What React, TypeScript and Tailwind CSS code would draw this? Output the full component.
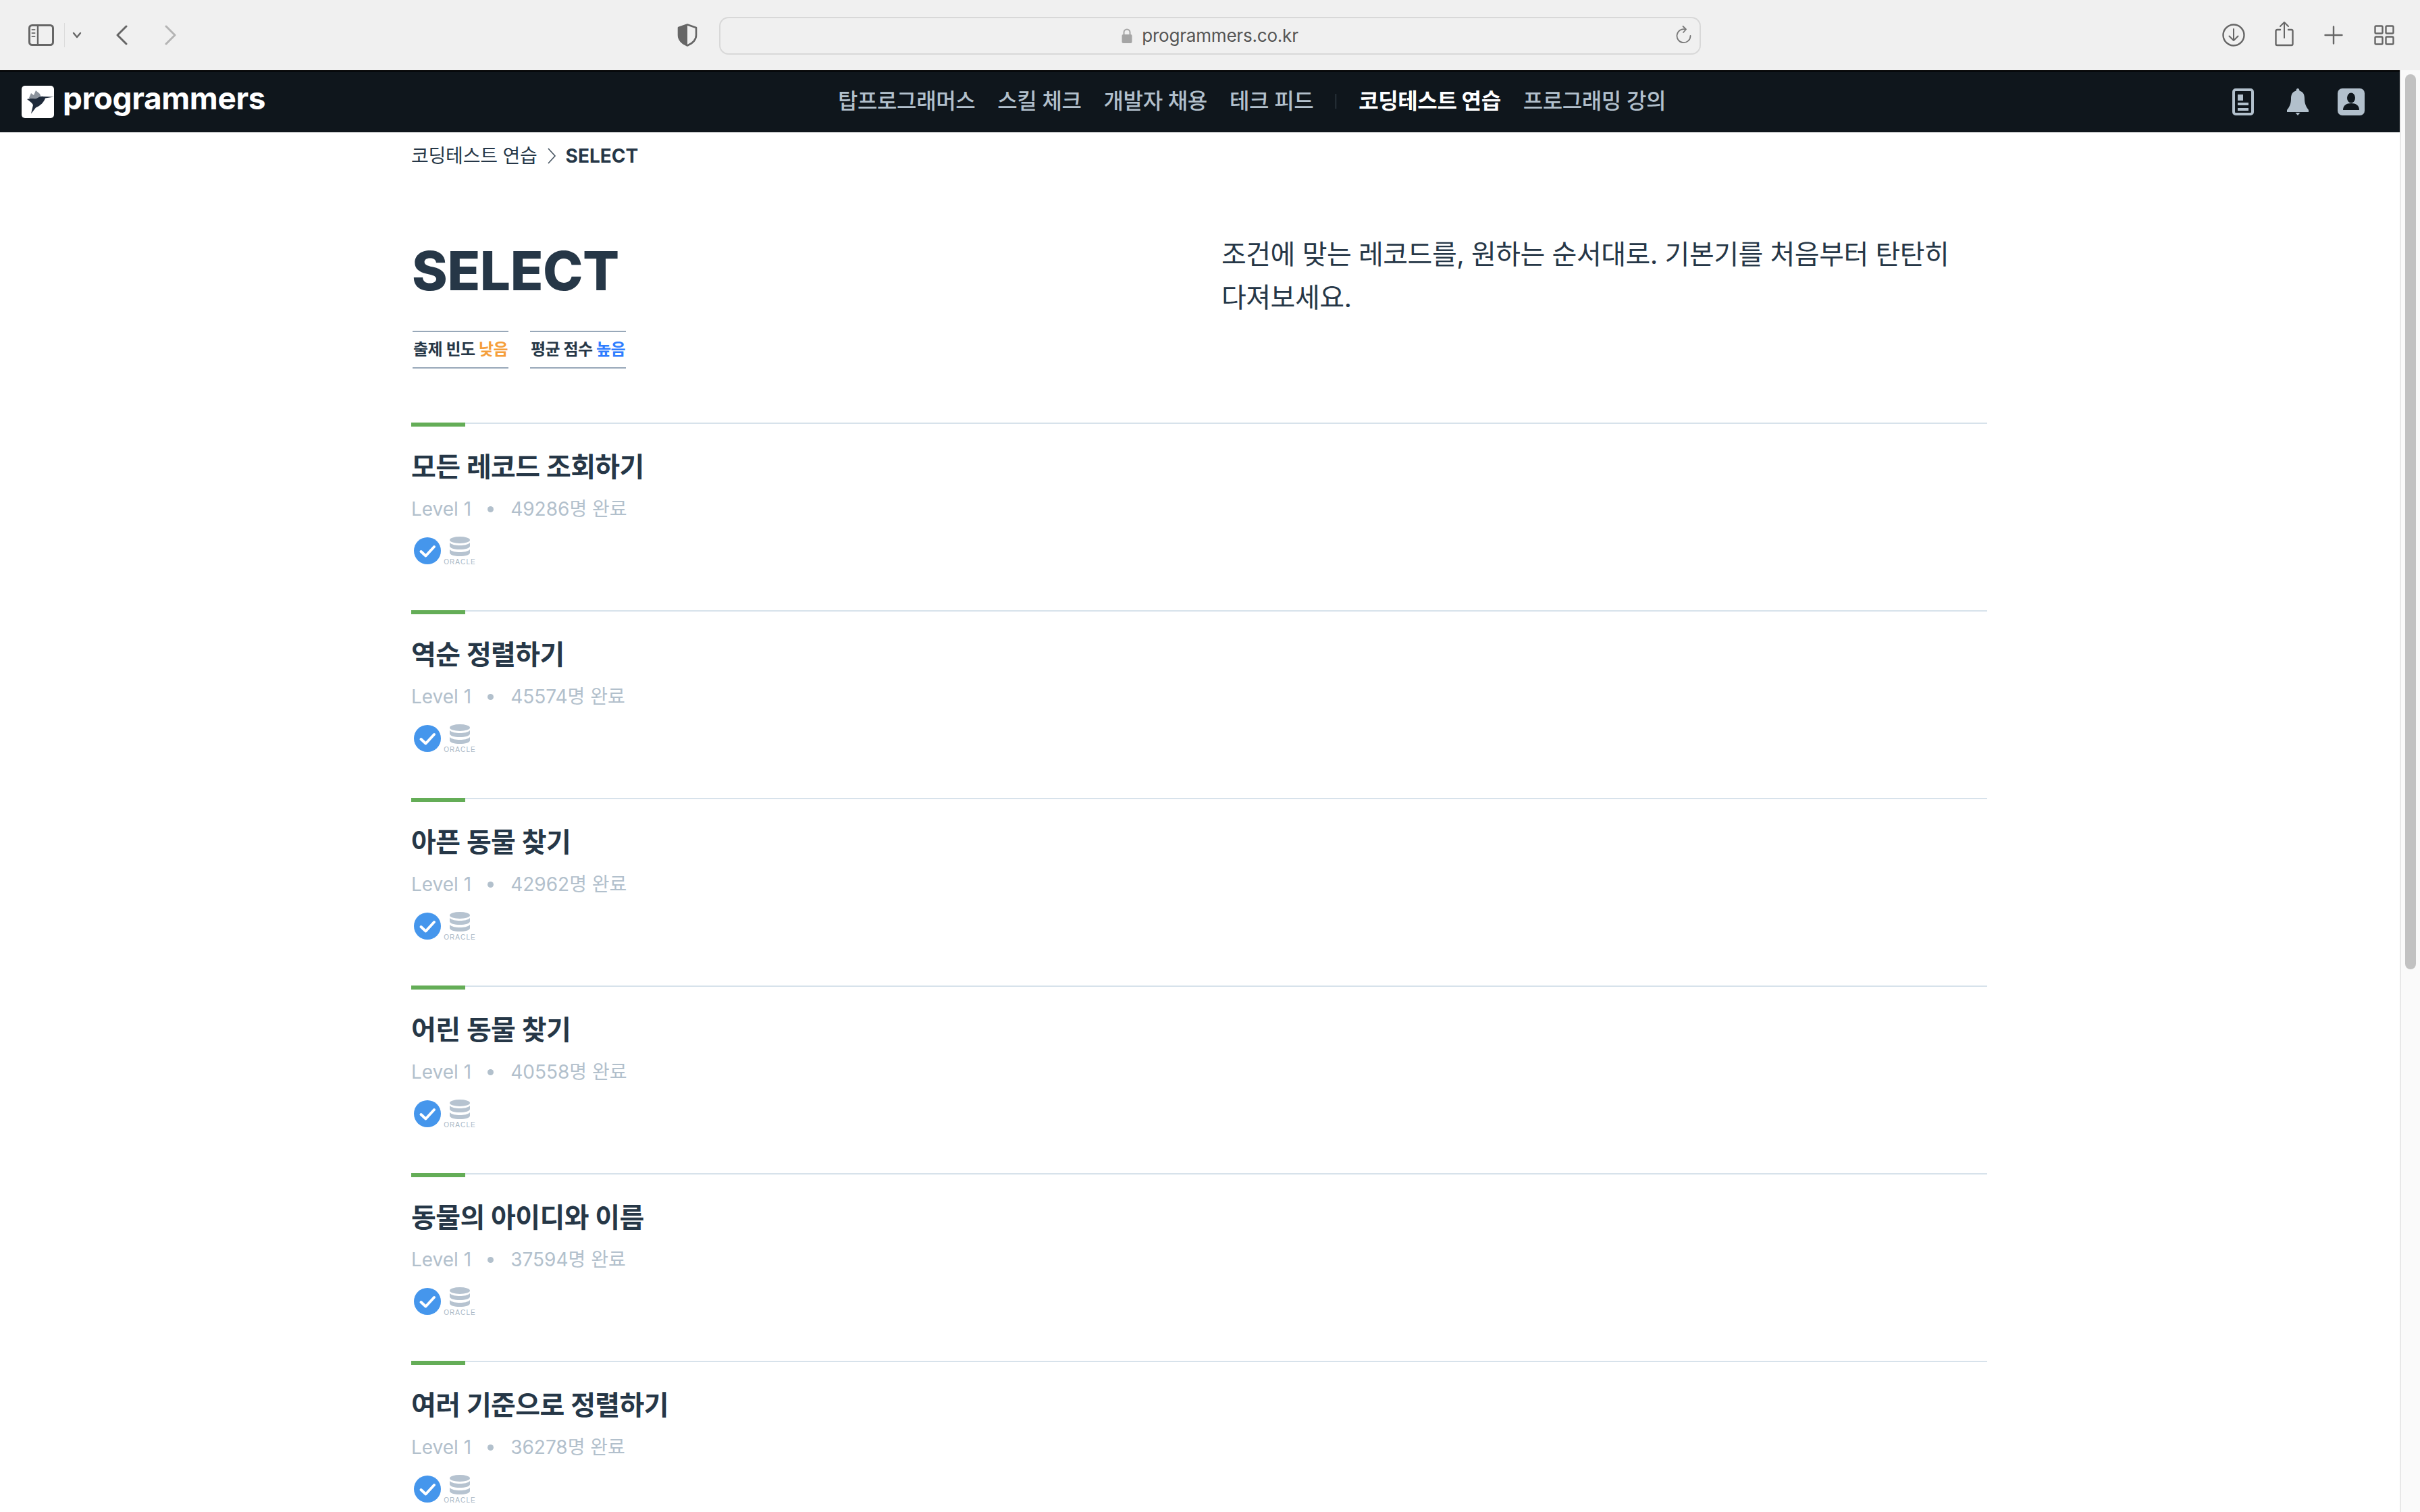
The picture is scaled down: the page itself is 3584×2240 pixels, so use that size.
import React from "react";

const font = "font-['Inter','Noto_Sans_CJK_KR',sans-serif]";
const items = [
  ["모든 레코드 조회하기", "49286"],
  ["역순 정렬하기", "45574"],
  ["아픈 동물 찾기", "42962"],
  ["어린 동물 찾기", "40558"],
  ["동물의 아이디와 이름", "37594"],
  ["여러 기준으로 정렬하기", "36278"],
];

function Stroke({ w, h, children, className = "" }: { w: number; h: number; children: React.ReactNode; className?: string }) {
  return (
    <svg width={w} height={h} viewBox={`0 0 ${w} ${h}`} fill="none" stroke="#666" strokeWidth="2.4" strokeLinecap="round" strokeLinejoin="round" className={`block shrink-0 ${className}`}>
      {children}
    </svg>
  );
}

function Toolbar() {
  return (
    <div className="flex h-[104px] shrink-0 items-center bg-[#f0f0f0]">
      <Stroke w={38} h={32} className="ml-[42px]">
        <rect x="1.5" y="1.5" width="35" height="29" rx="4" strokeWidth="3" />
        <path d="M14 2v28" />
        <path d="M5.5 8h4M5.5 13h4M5.5 18h4" strokeWidth="2" stroke="#777" />
      </Stroke>
      <div className="ml-[15px] h-[36px] w-[1px] bg-[#dcdcdc]" />
      <Stroke w={14} h={10} className="ml-[11px]">
        <path d="M2 2l5 6 5-6" strokeWidth="2.4" />
      </Stroke>
      <Stroke w={18} h={30} className="ml-[50px]">
        <path d="M16 2L3 15l13 13" strokeWidth="3" />
      </Stroke>
      <Stroke w={18} h={30} className="ml-[55px]">
        <path d="M2 2l13 13L2 28" stroke="#b4b4b4" strokeWidth="3" />
      </Stroke>
      <svg width="30" height="34" viewBox="0 0 30 34" className="ml-[741px] block shrink-0">
        <path d="M15 1.5l13 4.5v11c0 7-5 12-13 15.5C7 29 2 24 2 17V6z" fill="none" stroke="#666" strokeWidth="2.6" strokeLinejoin="round" />
        <path d="M15 1.5L2 6v11c0 7 5 12 13 15.5z" fill="#666" />
      </svg>
      <div className="relative ml-[32px] flex h-[56px] w-[1454px] translate-y-[1px] items-center justify-center rounded-[14px] border-2 border-[#d8d8d8] bg-[#f0f0f0]">
        <svg width="16" height="24" viewBox="0 0 16 24" className="mr-[14px] block">
          <path d="M3.5 12V7a4.5 4.5 0 019 0v5" fill="none" stroke="#a5a5a5" strokeWidth="2" />
          <rect x="0.5" y="10" width="15" height="13" rx="2" fill="#a5a5a5" />
        </svg>
        <span className={`${font} text-[26px] leading-none tracking-[-0.2px] text-[#555]`}>programmers.co.kr</span>
        <svg width="24" height="28" viewBox="0 0 24 28" fill="none" stroke="#777" strokeWidth="1.8" strokeLinecap="round" strokeLinejoin="round" className="absolute right-[11px] top-[11px] block">
          <path d="M14 5.5A10 10 0 1021.5 15" />
          <path d="M10.5 1l4.5 4.5L11 10" />
        </svg>
      </div>
      <Stroke w={34} h={34} className="ml-[772px]">
        <circle cx="17" cy="17" r="15.5" />
        <path d="M17 8v17M10.5 18.5L17 25l6.5-6.5" strokeWidth="2" />
      </Stroke>
      <Stroke w={28} h={38} className="ml-[44px] -translate-y-[2px]">
        <path d="M8 13H3.5A2 2 0 001.5 15v19a2 2 0 002 2h21a2 2 0 002-2V15a2 2 0 00-2-2H20" />
        <path d="M14 25V2M8 8l6-6 6 6" strokeWidth="2" />
      </Stroke>
      <Stroke w={28} h={28} className="ml-[45px]">
        <path d="M14 1.5v25M1.5 14h25" />
      </Stroke>
      <Stroke w={30} h={30} className="ml-[46px]">
        <rect x="1.5" y="1.5" width="11" height="11" rx="1.5" />
        <rect x="17.5" y="1.5" width="11" height="11" rx="1.5" />
        <rect x="1.5" y="17.5" width="11" height="11" rx="1.5" />
        <rect x="17.5" y="17.5" width="11" height="11" rx="1.5" />
      </Stroke>
    </div>
  );
}

function Logo() {
  return (
    <div className="flex items-center">
      <svg width="48" height="48" viewBox="0 0 48 48" className="ml-[32px] block shrink-0">
        <rect width="48" height="48" rx="5" fill="#fff" />
        <path d="M11 18l3-7 4 3 3-7 6 5 3 8-10 6z" fill="#8c939c" />
        <path d="M8 20c6-2 10 0 14-1 3-1 5-4 10-3l16 .5-13 2c-2 6-7 11-14 14l-7 9 3-13c-2-4-6-6-9-8.500z" fill="#1e2a3a" />
      </svg>
      <span className="ml-[13px] w-[300px] -translate-y-[6px] whitespace-nowrap text-[46px] font-bold leading-none tracking-[-0.4px] text-white">programmers</span>
    </div>
  );
}

function Nav() {
  const grey = "text-[#b2c0cc]";
  return (
    <div className={`${font} flex h-[92px] shrink-0 items-center border-t-2 border-black bg-[#0f161c]`}>
      <Logo />
      <nav className="ml-[848px] flex -translate-y-[1px] items-center gap-[33px] text-[32px] font-medium leading-none tracking-[-0.4px]">
        <span className={grey}>탑프로그래머스</span>
        <span className={grey}>스킬 체크</span>
        <span className={grey}>개발자 채용</span>
        <span className={grey}>테크 피드</span>
        <span className="h-[22px] w-[1px] bg-[#46525c]" />
        <span className="font-bold text-white">코딩테스트 연습</span>
        <span className={grey}>프로그래밍 강의</span>
      </nav>
      <svg width="32" height="40" viewBox="0 0 32 40" className="ml-[839px] block shrink-0">
        <rect x="2" y="2" width="28" height="36" rx="3" fill="none" stroke="#b2c0cc" strokeWidth="4" />
        <rect x="8" y="9" width="8" height="9" fill="#b2c0cc" />
        <rect x="8" y="21" width="16" height="4" fill="#b2c0cc" />
        <rect x="8" y="29" width="16" height="4" fill="#b2c0cc" />
      </svg>
      <svg width="34" height="40" viewBox="0 0 34 40" className="ml-[48px] block shrink-0">
        <path d="M17 0c1.500 0 2.500 1.500 2.500 3.500C25 5 27 9 27 15c0 7 2 12 6 17v3H1v-3c4-5 6-10 6-17 0-6 2-10 7.500-11.500C14.500 1.500 15.500 0 17 0z" fill="#b2c0cc" />
        <path d="M13.500 36h7l-3.500 4z" fill="#b2c0cc" />
      </svg>
      <svg width="40" height="40" viewBox="0 0 40 40" className="ml-[42px] block shrink-0">
        <rect width="40" height="40" rx="7" fill="#b2c0cc" />
        <ellipse cx="20" cy="14" rx="6" ry="7.500" fill="#0f161c" />
        <path d="M8 32c0-7 5-10 12-10s12 3 12 10z" fill="#0f161c" />
      </svg>
    </div>
  );
}

function Tag({ label, value, color }: { label: string; value: string; color: string }) {
  return (
    <div className="flex h-[56px] w-[142px] items-center justify-center whitespace-nowrap border-y-2 border-[#98a8b9] text-[24px] font-semibold leading-none tracking-[-0.6px] text-[#263747]">
      <span>{label}&nbsp;</span>
      <span className={color}>{value}</span>
    </div>
  );
}

function Row({ title, count }: { title: string; count: string }) {
  return (
    <div className="h-[278px]">
      <div className="relative h-[2px] bg-[#d7e2eb]">
        <div className="absolute left-0 top-0 h-[6px] w-[80px] bg-[#64ad57]" />
      </div>
      <h3 className="mt-[40px] text-[40px] font-semibold leading-[48px] tracking-[-0.6px] text-[#263747]">{title}</h3>
      <div className="mt-[21px] flex h-[34px] items-center text-[28px] leading-none text-[#b2c0cc]">
        <span>Level 1</span>
        <span className="ml-[24px] h-[9px] w-[9px] rounded-full bg-[#b2c0cc]" />
        <span className="ml-[25px]">{count}명 완료</span>
      </div>
      <div className="ml-[4px] mt-[25px] flex items-start">
        <svg width="40" height="40" viewBox="0 0 40 40" className="block shrink-0">
          <circle cx="20" cy="20" r="20" fill="#4596ec" />
          <path d="M10.500 21l7 6.500L30 14" fill="none" stroke="#fff" strokeWidth="4" strokeLinecap="round" strokeLinejoin="round" />
        </svg>
        <div className="ml-[4px] flex w-[48px] -translate-y-[1px] flex-col items-center">
          <svg width="30" height="29" viewBox="0 0 30 29" className="block">
            <ellipse cx="15" cy="5" rx="15" ry="5" fill="#b6c3d0" />
            <path d="M0 9c3 3 9 4 15 4s12-1 15-4v5c0 3-7 5-15 5S0 17 0 14z" fill="#b6c3d0" />
            <path d="M0 19c3 3 9 4 15 4s12-1 15-4v5c0 3-7 5-15 5S0 27 0 24z" fill="#b6c3d0" />
          </svg>
          <span className="mt-[4px] font-['Liberation_Sans',sans-serif] text-[10px] leading-[9px] tracking-[1.1px] text-[#a9b7c4]">ORACLE</span>
        </div>
      </div>
    </div>
  );
}

function Main() {
  return (
    <main className={`${font} ml-[609px] w-[2334px] overflow-hidden`}>
      <div className="flex h-[60px] items-center pt-[10px] text-[28px] leading-none tracking-[-0.2px] text-[#263747]">
        <span>코딩테스트 연습</span>
        <svg width="14" height="24" viewBox="0 0 14 24" className="mx-[14px] block">
          <path d="M2 1l10 11L2 23" fill="none" stroke="#44525f" strokeWidth="1.600" />
        </svg>
        <span className="font-bold tracking-normal">SELECT</span>
      </div>
      <div className="mt-[97px] flex h-[273px] items-start">
        <div className="w-[1200px]">
          <h1 className="pl-[1px] text-[80px] font-extrabold leading-[96px] tracking-[-0.4px] text-[#263747]">SELECT</h1>
          <div className="ml-[2px] mt-[41px] flex gap-[32px]">
            <Tag label="출제 빈도" value="낮음" color="text-[#f59e3b]" />
            <Tag label="평균 점수" value="높음" color="text-[#2f7dff]" />
          </div>
        </div>
        <p className="-mt-[8px] w-[1120px] text-[40px] leading-[64px] tracking-[-0.5px] text-[#263747]">
          조건에 맞는 레코드를, 원하는 순서대로. 기본기를 처음부터 탄탄히 다져보세요.
        </p>
      </div>
      {items.map(([t, c]) => (
        <Row key={c} title={t} count={c} />
      ))}
    </main>
  );
}

export default function App() {
  return (
    <div className="flex h-[2240px] w-[3584px] flex-col overflow-hidden bg-white">
      <Toolbar />
      <div className="flex min-h-0 flex-1">
        <div className="flex w-[3554px] flex-col overflow-hidden">
          <Nav />
          <Main />
        </div>
        <div className="flex-1 border-l-2 border-[#e8e8e8] bg-[#fafafa] px-[6px] pt-[6px]">
          <div className="h-[1326px] w-[16px] rounded-full bg-[#c2c2c2]" />
        </div>
      </div>
    </div>
  );
}
